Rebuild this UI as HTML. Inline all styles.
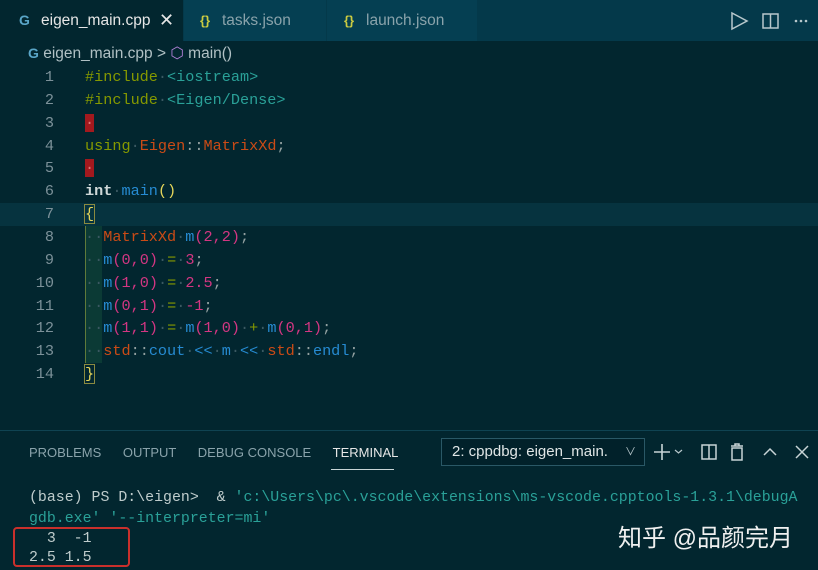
<!DOCTYPE html>
<html><head><meta charset="utf-8"><style>
*{margin:0;padding:0;box-sizing:border-box}
body{width:818px;height:570px;background:#02262f;overflow:hidden;position:relative;font-family:"Liberation Sans","Noto Sans CJK SC",sans-serif;color:#93a1a1}
.tabs{position:absolute;left:0;top:0;width:818px;height:41px;background:#04394a}
.tab{position:absolute;top:0;height:41px;font-size:15.5px;line-height:41px;color:#8aa3ab}
.tab.act{background:#02262f;color:#e6e6e6}
.code{position:absolute;left:0;top:66px;font-family:"Liberation Mono",monospace;font-size:15.2px}
.ln{position:absolute;left:0;width:54px;text-align:right;color:#7c9199;height:22.85px;line-height:22.85px}
.l{position:absolute;left:85px;white-space:pre;height:22.85px;line-height:22.85px}
.g{color:#859900}.t{color:#2aa198}.o{color:#cb4b16}.b{color:#268bd2}.p{color:#d33682}.y{color:#b58900}.d{color:#3b5962}.w{color:#93a1a1}.k{color:#cfd8d8;font-weight:bold}.br{color:#e6d65a}
.term{position:absolute;left:29px;font-family:"Liberation Mono",monospace;font-size:15px;white-space:pre;color:#bfcccc}
</style></head><body>
<div class="tabs">
 <div class="tab act" style="left:0;width:183px"><span style="position:absolute;left:19px;color:#5aa6c8;font-weight:bold;font-size:14px">G</span><span style="position:absolute;left:41px">eigen_main.cpp</span><span style="position:absolute;left:159px;font-size:18px">✕</span></div>
 <div class="tab" style="left:184px;width:142px;background:#053f52"><span style="position:absolute;left:16px;color:#cbcb41;font-weight:bold;font-size:13px">{}</span><span style="position:absolute;left:38px">tasks.json</span></div>
 <div class="tab" style="left:327px;width:150px;background:#053f52"><span style="position:absolute;left:17px;color:#cbcb41;font-weight:bold;font-size:13px">{}</span><span style="position:absolute;left:39px">launch.json</span></div>
 <svg style="position:absolute;left:730px;top:11px" width="90" height="20" viewBox="0 0 90 20"><path d="M2 2 L17 10 L2 18 Z" fill="none" stroke="#b8c8cc" stroke-width="1.5"/><rect x="33" y="3" width="15" height="14" fill="none" stroke="#b8c8cc" stroke-width="1.5"/><line x1="40.5" y1="3" x2="40.5" y2="17" stroke="#b8c8cc" stroke-width="1.5"/><circle cx="66" cy="10" r="1.3" fill="#b8c8cc"/><circle cx="71" cy="10" r="1.3" fill="#b8c8cc"/><circle cx="76" cy="10" r="1.3" fill="#b8c8cc"/></svg>
</div>
<div style="position:absolute;left:28px;top:44px;font-size:15.5px;color:#b0c0c4"><span style="color:#5aa6c8;font-weight:bold;font-size:14px">G</span> eigen_main.cpp &gt; <span style="color:#b180d7">⬡</span> main()</div>
<div style="position:absolute;left:0;top:203px;width:818px;height:23px;background:#06333f"></div>
<div style="position:absolute;left:85px;top:226px;width:17px;height:137px;background:#0b3a35"></div>
<div style="position:absolute;left:85px;top:226px;width:1px;height:137px;background:#5f7a3a"></div>
<div class="code">
<div class="ln" style="top:0">1</div><div class="l" style="top:0"><span class="g">#include</span><span class="d">·</span><span class="t">&lt;iostream&gt;</span></div>
<div class="ln" style="top:22.85px">2</div><div class="l" style="top:22.85px"><span class="g">#include</span><span class="d">·</span><span class="t">&lt;Eigen/Dense&gt;</span></div>
<div class="ln" style="top:45.7px">3</div><div class="l" style="top:45.7px"><span style="background:#a3191e;color:#d77">·</span></div>
<div class="ln" style="top:68.55px">4</div><div class="l" style="top:68.55px"><span class="g">using</span><span class="d">·</span><span class="o">Eigen</span><span class="w">::</span><span class="o">MatrixXd</span><span class="w">;</span></div>
<div class="ln" style="top:91.4px">5</div><div class="l" style="top:91.4px"><span style="background:#a3191e;color:#d77">·</span></div>
<div class="ln" style="top:114.25px">6</div><div class="l" style="top:114.25px"><span class="k">int</span><span class="d">·</span><span class="b">main</span><span class="br">()</span></div>
<div class="ln" style="top:137.1px">7</div><div class="l" style="top:137.1px"><span class="br" style="outline:1px solid #8a8a40">{</span></div>
<div class="ln" style="top:159.95px">8</div><div class="l" style="top:159.95px"><span class="d">··</span><span class="o">MatrixXd</span><span class="d">·</span><span class="b">m</span><span class="p">(2,2)</span><span class="w">;</span></div>
<div class="ln" style="top:182.8px">9</div><div class="l" style="top:182.8px"><span class="d">··</span><span class="b">m</span><span class="p">(0,0)</span><span class="d">·</span><span class="g">=</span><span class="d">·</span><span class="p">3</span><span class="w">;</span></div>
<div class="ln" style="top:205.65px">10</div><div class="l" style="top:205.65px"><span class="d">··</span><span class="b">m</span><span class="p">(1,0)</span><span class="d">·</span><span class="g">=</span><span class="d">·</span><span class="p">2.5</span><span class="w">;</span></div>
<div class="ln" style="top:228.5px">11</div><div class="l" style="top:228.5px"><span class="d">··</span><span class="b">m</span><span class="p">(0,1)</span><span class="d">·</span><span class="g">=</span><span class="d">·</span><span class="p">-1</span><span class="w">;</span></div>
<div class="ln" style="top:251.35px">12</div><div class="l" style="top:251.35px"><span class="d">··</span><span class="b">m</span><span class="p">(1,1)</span><span class="d">·</span><span class="g">=</span><span class="d">·</span><span class="b">m</span><span class="p">(1,0)</span><span class="d">·</span><span class="g">+</span><span class="d">·</span><span class="b">m</span><span class="p">(0,1)</span><span class="w">;</span></div>
<div class="ln" style="top:274.2px">13</div><div class="l" style="top:274.2px"><span class="d">··</span><span class="o">std</span><span class="w">::</span><span class="b">cout</span><span class="d">·</span><span class="b">&lt;&lt;</span><span class="d">·</span><span class="b">m</span><span class="d">·</span><span class="b">&lt;&lt;</span><span class="d">·</span><span class="o">std</span><span class="w">::</span><span class="b">endl</span><span class="w">;</span></div>
<div class="ln" style="top:297.05px">14</div><div class="l" style="top:297.05px"><span class="br" style="outline:1px solid #8a8a40">}</span></div>
</div>
<div style="position:absolute;left:0;top:430px;width:818px;height:1px;background:#0f4352"></div>
<div style="position:absolute;top:445px;left:29px;font-size:13px;color:#8aa3ab;white-space:pre">PROBLEMS      OUTPUT      DEBUG CONSOLE      <span style="color:#e6e6e6">TERMINAL</span></div>
<div style="position:absolute;left:331px;top:469px;width:63px;height:1px;background:#c8d4d6"></div>
<div style="position:absolute;left:441px;top:438px;width:204px;height:28px;border:1px solid #2a5866;background:#01212a;color:#e0e6e6;font-size:15px;line-height:26px;padding-left:10px">2: cppdbg: eigen_main.<span style="position:absolute;right:8px;font-size:11px;color:#b8c8cc">∨</span></div>
<svg style="position:absolute;left:650px;top:440px" width="165" height="24" viewBox="0 0 165 24"><path d="M12 4V20M4 12H20" stroke="#c8d4d6" stroke-width="1.6"/><path d="M25 10l3.5 3 3.5-3" fill="none" stroke="#b8c8cc" stroke-width="1.2"/><rect x="52" y="5" width="14" height="14" fill="none" stroke="#c8d4d6" stroke-width="1.5"/><line x1="59" y1="5" x2="59" y2="19" stroke="#c8d4d6" stroke-width="1.5"/><path d="M81 6h12M85 6V4h4v2M82 8h10v12H82z" fill="none" stroke="#c8d4d6" stroke-width="1.5"/><path d="M114 15l6-6 6 6" fill="none" stroke="#c8d4d6" stroke-width="1.5"/><path d="M146 6l12 12M158 6l-12 12" stroke="#c8d4d6" stroke-width="1.5"/></svg>
<div class="term" style="left:29px;top:490px;font-size:14.9px">(base) PS D:\eigen>  &amp; <span class="t">'c:\Users\pc\.vscode\extensions\ms-vscode.cpptools-1.3.1\debugA</span></div>
<div class="term" style="left:29px;top:511px;font-size:14.9px"><span class="t">gdb.exe' '--interpreter=mi'</span></div>
<div class="term" style="left:29px;top:531px;font-size:14.9px">  3  -1</div>
<div class="term" style="left:29px;top:550px;font-size:14.9px">2.5 1.5</div>
<div style="position:absolute;left:13px;top:527px;width:117px;height:40px;border:2px solid #c9302c;border-radius:4px"></div>
<div style="position:absolute;left:618px;top:518px;font-size:24px;color:#f0f0f0;font-family:'Liberation Sans','Noto Sans CJK SC',sans-serif">知乎 @品颜完月</div>
</body></html>
